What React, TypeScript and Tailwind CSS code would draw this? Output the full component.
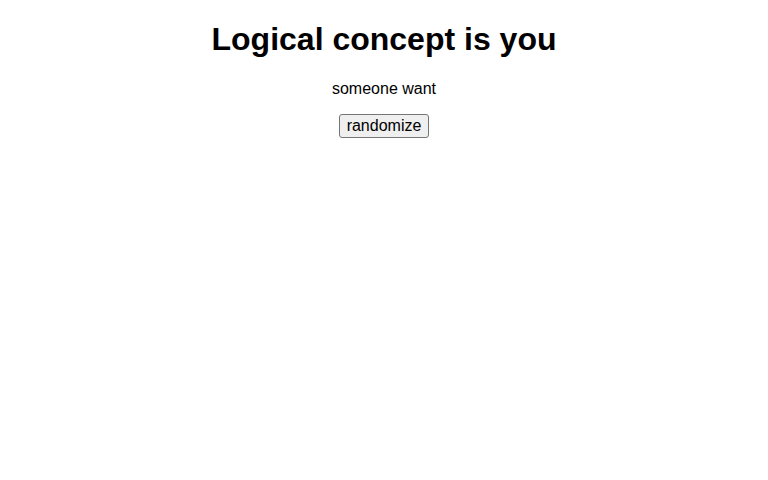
import { useState } from "react";

const WORDS = ["Logical", "Abstract", "Random", "Curious", "Simple"];
const NOUNS = ["concept", "idea", "notion", "thought", "pattern"];

export default function App() {
  const [title, setTitle] = useState("Logical concept is you");

  const randomize = () => {
    const w = WORDS[Math.floor(Math.random() * WORDS.length)];
    const n = NOUNS[Math.floor(Math.random() * NOUNS.length)];
    setTitle(`${w} ${n} is you`);
  };

  return (
    <div className="min-h-screen bg-white text-center text-black font-['Liberation_Sans',Arial,sans-serif]">
      <h1 className="pt-[21px] text-[32px] leading-[37px] font-bold">{title}</h1>
      <p className="mt-[22px] text-base leading-[18px]">someone want</p>
      <div className="mt-4">
        <button
          onClick={randomize}
          className="h-6 rounded-[3px] border border-[#767676] bg-[#efefef] px-[7px] text-base leading-[20px] text-black hover:bg-[#e5e5e5]"
        >
          randomize
        </button>
      </div>
    </div>
  );
}
